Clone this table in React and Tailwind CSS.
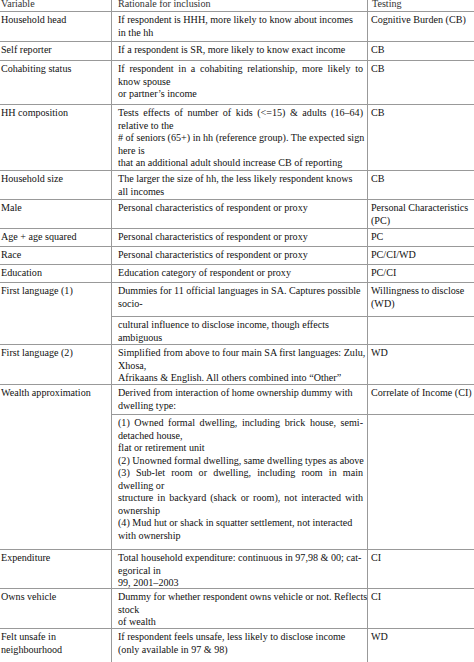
const J = (text) => ({ text, justify: true });

const rows = [
  {
    variable: ["Household head"],
    rationale: ["If respondent is HHH, more likely to know about incomes", "in the hh"],
    testing: ["Cognitive Burden (CB)"],
  },
  {
    variable: ["Self reporter"],
    rationale: ["If a respondent is SR, more likely to know exact income"],
    testing: ["CB"],
  },
  {
    variable: ["Cohabiting status"],
    rationale: [J("If respondent in a cohabiting relationship, more likely to"), "know spouse", "or partner’s income"],
    testing: ["CB"],
  },
  {
    variable: ["HH composition"],
    rationale: [
      J("Tests effects of number of kids (<=15) & adults (16–64)"),
      "relative to the",
      "# of seniors (65+) in hh (reference group). The expected sign",
      "here is",
      "that an additional adult should increase CB of reporting",
    ],
    testing: ["CB"],
  },
  {
    variable: ["Household size"],
    rationale: ["The larger the size of hh, the less likely respondent knows", "all incomes"],
    testing: ["CB"],
  },
  {
    variable: ["Male"],
    rationale: ["Personal characteristics of respondent or proxy"],
    testing: ["Personal Characteristics", "(PC)"],
  },
  {
    variable: ["Age + age squared"],
    rationale: ["Personal characteristics of respondent or proxy"],
    testing: ["PC"],
  },
  {
    variable: ["Race"],
    rationale: ["Personal characteristics of respondent or proxy"],
    testing: ["PC/CI/WD"],
  },
  {
    variable: ["Education"],
    rationale: ["Education category of respondent or proxy"],
    testing: ["PC/CI"],
  },
  {
    variable: ["First language (1)"],
    span: true,
    rationale: ["Dummies for 11 official languages in SA. Captures possible", "socio-"],
    testing: ["Willingness to disclose", "(WD)"],
  },
  {
    rationale: ["cultural influence to disclose income, though effects", "ambiguous"],
    testing: [],
  },
  {
    variable: ["First language (2)"],
    rationale: [
      "Simplified from above to four main SA first languages: Zulu,",
      "Xhosa,",
      "Afrikaans & English. All others combined into “Other”",
    ],
    testing: ["WD"],
  },
  {
    variable: ["Wealth approximation"],
    span: true,
    rationale: ["Derived from interaction of home ownership dummy with", "dwelling type:"],
    testing: ["Correlate of Income (CI)"],
  },
  {
    rationale: [
      J("(1) Owned formal dwelling, including brick house, semi-"),
      "detached house,",
      "flat or retirement unit",
      "(2) Unowned formal dwelling, same dwelling types as above",
      J("(3) Sub-let room or dwelling, including room in main"),
      "dwelling or",
      J("structure in backyard (shack or room), not interacted with"),
      "ownership",
      "(4) Mud hut or shack in squatter settlement, not interacted",
      "with ownership",
    ],
    testing: [],
  },
  {
    variable: ["Expenditure"],
    rationale: ["Total household expenditure: continuous in 97,98 & 00; cat-", "egorical in", "99, 2001–2003"],
    testing: ["CI"],
  },
  {
    variable: ["Owns vehicle"],
    rationale: ["Dummy for whether respondent owns vehicle or not. Reflects", "stock", "of wealth"],
    testing: ["CI"],
  },
  {
    variable: ["Felt unsafe in", "neighbourhood"],
    rationale: ["If respondent feels unsafe, less likely to disclose income", "(only available in 97 & 98)"],
    testing: ["WD"],
  },
];

function Lines({ lines }) {
  return lines.map((l, i) =>
    typeof l === "string" ? (
      <div key={i} className="whitespace-nowrap">{l}</div>
    ) : (
      <div key={i} className="text-justify [text-align-last:justify]">{l.text}</div>
    )
  );
}

export default function App() {
  return (
    <div className="w-[474px] h-[662px] overflow-hidden bg-white">
      <div className="grid grid-cols-[111px_256px_120px] grid-rows-[12px_30px_19px_44px_66px_29px_29px_18px_18px_18px_34px_28px_40px_30px_135px_39px_40px_35px] font-['Liberation_Serif','Times_New_Roman',serif] text-[10.1px] leading-[12.5px] text-[#111]">
        {/* header row, its top is cut off in the picture */}
        <div className="border-b border-[#999] pl-px pt-px leading-[6px] text-[#333]">Variable</div>
        <div className="border-b border-l border-[#999] pl-[6px] pt-px leading-[6px] text-[#333]">Rationale for inclusion</div>
        <div className="border-b border-l border-[#999] pl-[4px] pt-px leading-[6px] text-[#333]">Testing</div>

        {rows.map((r, i) => [
          r.variable && (
            <div
              key={`v${i}`}
              className={`border-b border-[#999] pl-px pt-[2px] ${r.span ? "row-span-2" : ""}`}
            >
              <Lines lines={r.variable} />
            </div>
          ),
          <div key={`r${i}`} className="border-b border-l border-[#999] pl-[6px] pr-[4px] pt-[2px]">
            <Lines lines={r.rationale} />
          </div>,
          <div key={`t${i}`} className="border-b border-l border-[#999] pl-[3px] pt-[2px]">
            <Lines lines={r.testing} />
          </div>,
        ])}
      </div>
    </div>
  );
}
